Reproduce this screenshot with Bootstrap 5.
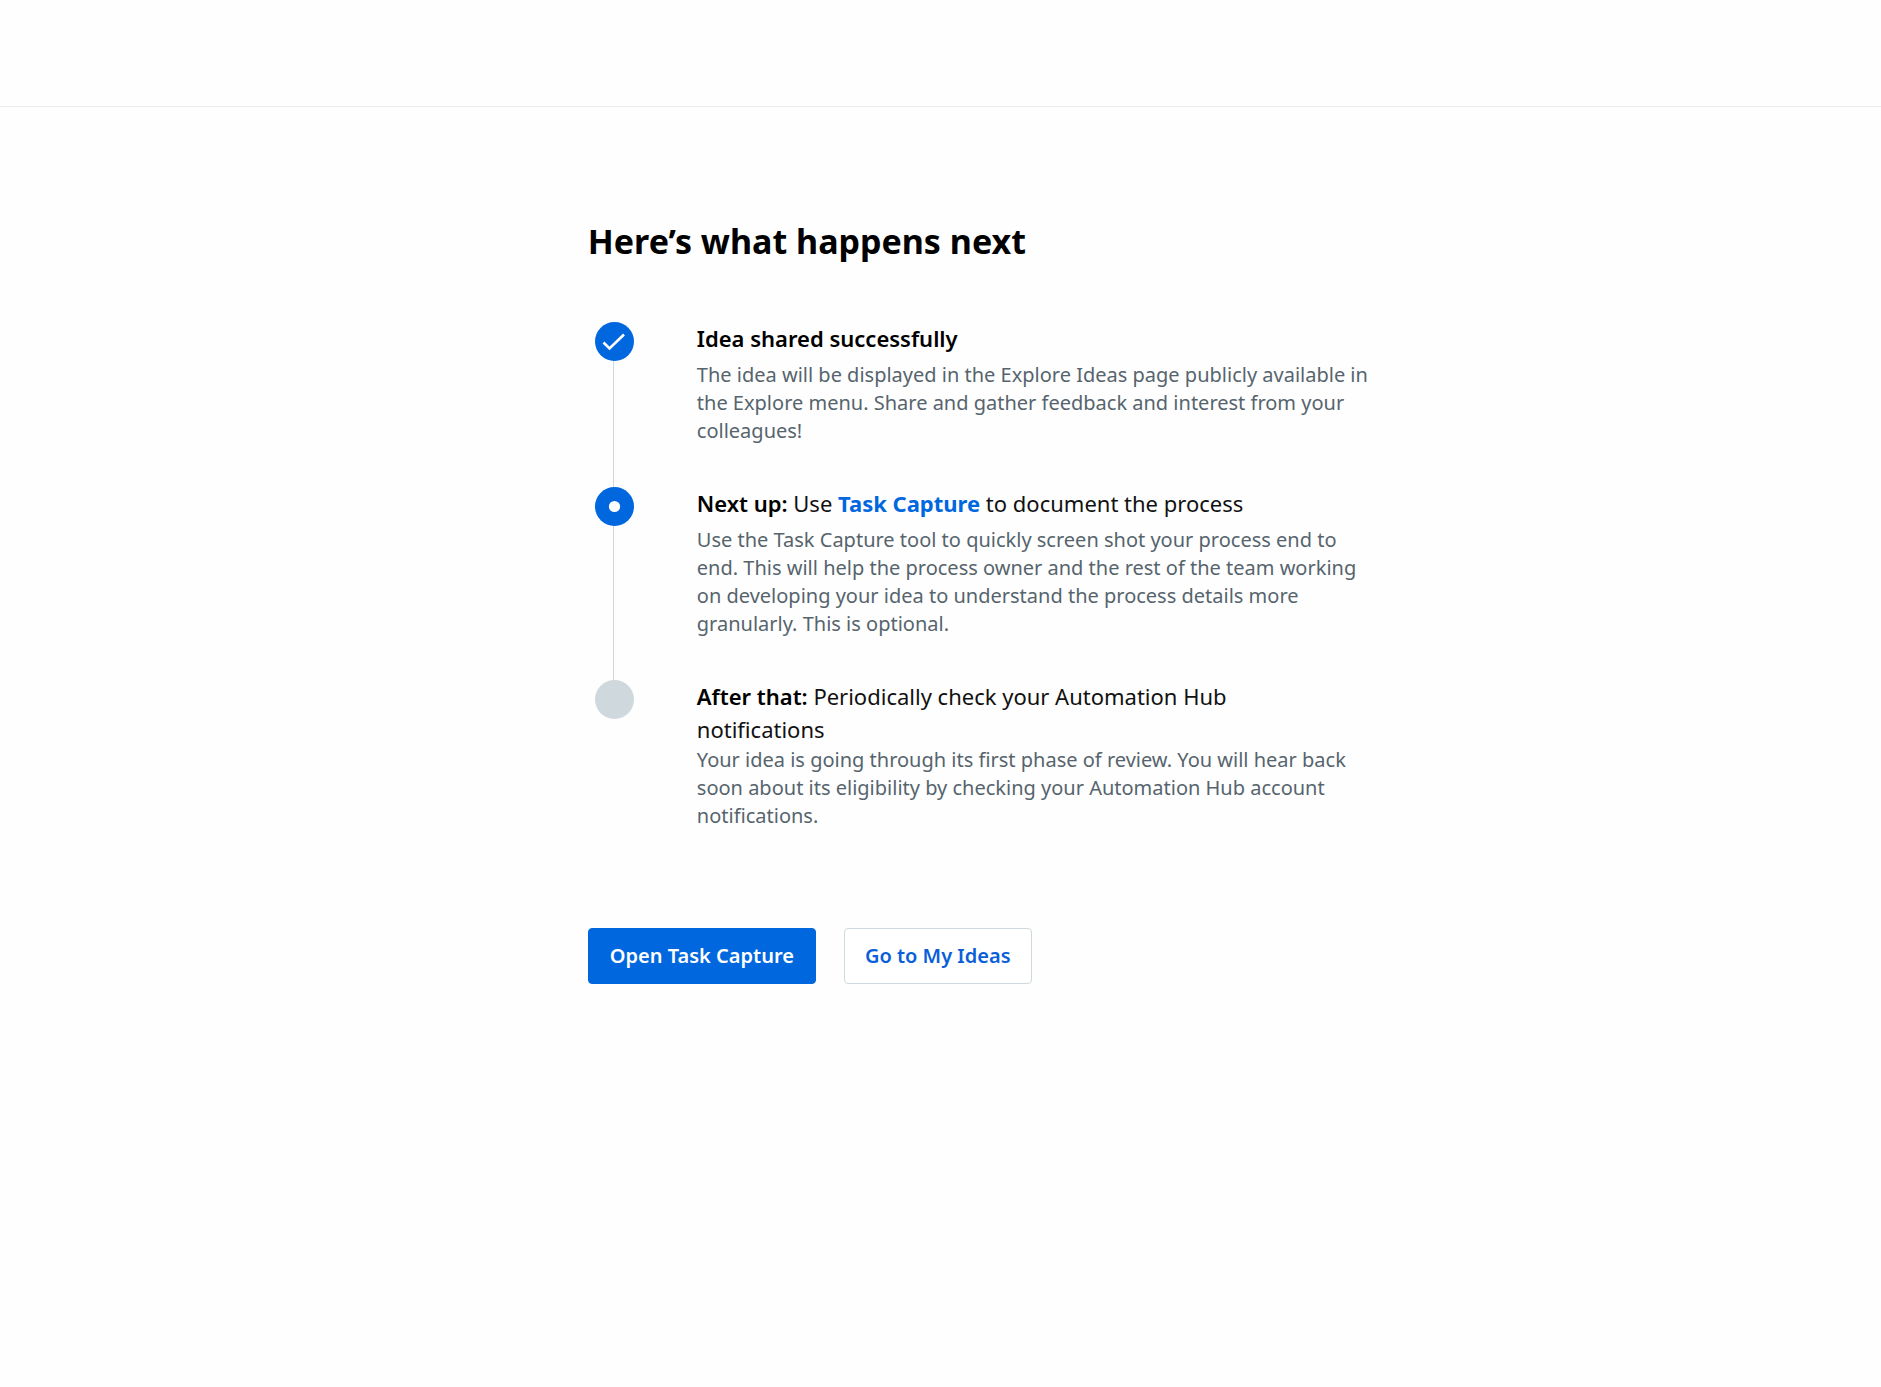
<!DOCTYPE html>
<html lang="en">
<head>
<meta charset="utf-8">
<meta name="viewport" content="width=device-width, initial-scale=1">
<title>Here’s what happens next</title>
<link href="https://cdn.jsdelivr.net/npm/bootstrap@5.3.0/dist/css/bootstrap.min.css" rel="stylesheet">
<style>
  body { font-family: "Noto Sans", sans-serif; background: #fefefe; color: #000; }
  .top-bar { height: 107px; border-bottom: 1px solid #ebebeb; }
  .next-steps { max-width: 788px; margin-left: 31.25%; padding-top: 110px; }
  .page-title { font-size: 34px; line-height: 48px; font-weight: 700; margin-bottom: 57px; }
  .step-rail { width: 109px; padding-left: 7px; }
  .step-dot { width: 39px; height: 39px; }
  .step-line { width: 1px; margin-left: 18px; background: #cfd8dd; }
  .step-text { padding-bottom: 42px; }
  .step-title { font-size: 22px; line-height: 33px; min-height: 39px; font-weight: 400; margin: 0; padding-right: 24px; color: #111; }
  .step-title b { font-weight: 600; color: #000; }
  .step-title a { color: #0067df; font-weight: 700; text-decoration: none; }
  .step-body { font-size: 20px; line-height: 28px; color: #56646d; margin: 0; }
  .actions { margin-top: 56px; gap: 28px; }
  .action-btn { --bs-btn-font-size: 20px; --bs-btn-font-weight: 600; --bs-btn-line-height: 28px; --bs-btn-padding-y: 13px; --bs-btn-padding-x: 20px; --bs-btn-border-radius: 4px; }
  .action-main { --bs-btn-bg: #0067df; --bs-btn-border-color: #0067df; --bs-btn-color: #fff; --bs-btn-hover-bg: #0056ba; --bs-btn-hover-color: #fff; --bs-btn-padding-x: 21px; }
  .action-alt { --bs-btn-bg: #fff; --bs-btn-border-color: #cfd8dd; --bs-btn-color: #0a5fd9; --bs-btn-hover-bg: #f2f6fa; --bs-btn-hover-color: #0a5fd9; }
</style>
<script src="https://cdn.jsdelivr.net/npm/bootstrap@5.3.0/dist/js/bootstrap.bundle.min.js"></script>
</head>
<body>
<header class="top-bar"></header>
<main class="next-steps">
  <h1 class="page-title">Here’s what happens next</h1>
  <ol class="list-unstyled m-0">
    <li class="d-flex">
      <div class="step-rail d-flex flex-column flex-shrink-0">
        <svg class="step-dot flex-shrink-0" viewBox="0 0 39 39" aria-hidden="true"><circle cx="19.500" cy="19.500" r="19.500" fill="#0067df"/><path d="M8.500 20.500l6 6L29 12.500" fill="none" stroke="#fff" stroke-width="2.600"/></svg>
        <div class="step-line flex-grow-1"></div>
      </div>
      <div class="step-text">
        <h2 class="step-title"><b>Idea shared successfully</b></h2>
        <p class="step-body">The idea will be displayed in the Explore Ideas page publicly available in the Explore menu. Share and gather feedback and interest from your colleagues!</p>
      </div>
    </li>
    <li class="d-flex">
      <div class="step-rail d-flex flex-column flex-shrink-0">
        <svg class="step-dot flex-shrink-0" viewBox="0 0 39 39" aria-hidden="true"><circle cx="19.500" cy="19.500" r="19.500" fill="#0067df"/><circle cx="19.500" cy="19.500" r="5.600" fill="#fff"/></svg>
        <div class="step-line flex-grow-1"></div>
      </div>
      <div class="step-text">
        <h2 class="step-title"><b>Next up:</b> Use <a href="#">Task Capture</a> to document the process</h2>
        <p class="step-body">Use the Task Capture tool to quickly screen shot your process end to end. This will help the process owner and the rest of the team working on developing your idea to understand the process details more granularly. This is optional.</p>
      </div>
    </li>
    <li class="d-flex">
      <div class="step-rail flex-shrink-0">
        <svg class="step-dot d-block" viewBox="0 0 39 39" aria-hidden="true"><circle cx="19.500" cy="19.500" r="19.500" fill="#cfd8dd"/></svg>
      </div>
      <div class="step-text">
        <h2 class="step-title"><b>After that:</b> Periodically check your Automation Hub notifications</h2>
        <p class="step-body">Your idea is going through its first phase of review. You will hear back soon about its eligibility by checking your Automation Hub account notifications.</p>
      </div>
    </li>
  </ol>
  <div class="actions d-flex flex-wrap">
    <button type="button" class="btn action-btn action-main">Open Task Capture</button>
    <button type="button" class="btn action-btn action-alt">Go to My Ideas</button>
  </div>
</main>
</body>
</html>
